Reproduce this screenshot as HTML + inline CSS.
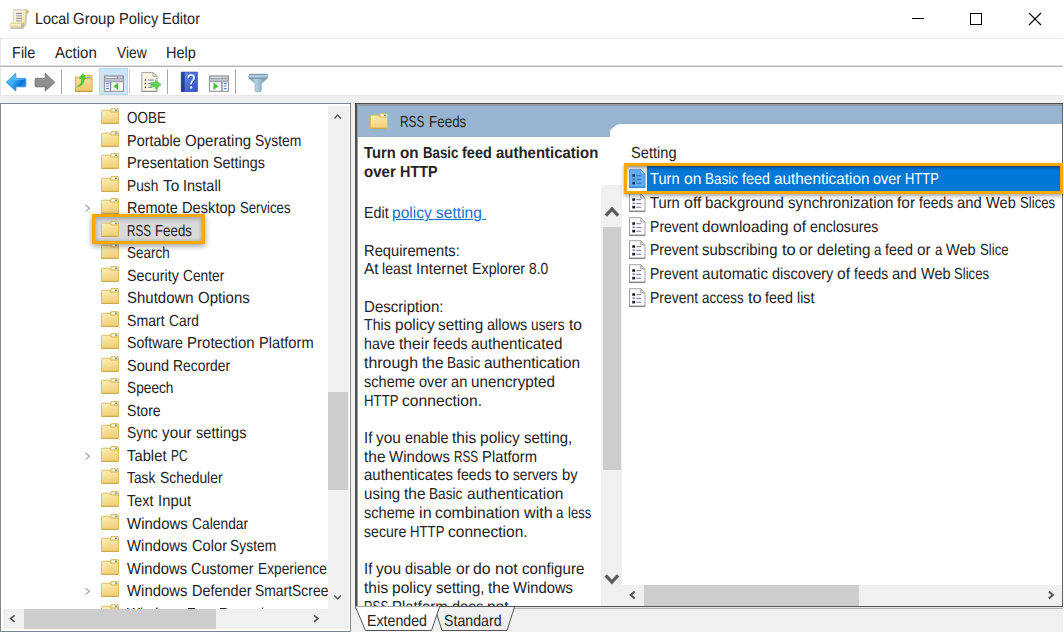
<!DOCTYPE html>
<html lang="en"><head><meta charset="utf-8"><title>Local Group Policy Editor</title>
<style>
html,body{margin:0;padding:0}
body{width:1064px;height:632px;position:relative;overflow:hidden;background:#fff;font-family:"Liberation Sans",sans-serif;font-size:15px;color:#242424}
.a{position:absolute}
.t{position:absolute;white-space:pre;line-height:20px;font-size:16px;transform-origin:0 50%}
.clip{position:absolute;overflow:hidden}
</style></head><body>

<svg width="0" height="0" style="position:absolute"><defs><linearGradient id="fg" x1="0" y1="0" x2="0.3" y2="1"><stop offset="0" stop-color="#fcefb8"/><stop offset="1" stop-color="#f1d077"/></linearGradient></defs></svg>
<svg style="position:absolute;left:4px;top:4px" width="32" height="30" viewBox="4 4 32 30">
<defs><linearGradient id="pg" x1="0" y1="0" x2="1" y2="1"><stop offset="0" stop-color="#fdf8e2"/><stop offset="0.6" stop-color="#fbefc0"/><stop offset="1" stop-color="#f3dc92"/></linearGradient>
<linearGradient id="rl" x1="0" y1="0" x2="0" y2="1"><stop offset="0" stop-color="#e8d9a0"/><stop offset="0.35" stop-color="#fdf6d8"/><stop offset="1" stop-color="#d8c680"/></linearGradient></defs>
<path d="M14.6 9h11.6l1.2 2.5-0.9 12.8-2.3 3.2H13.5z" fill="#b4b4b4" opacity="0.75"/>
<path d="M14 9.6h11.7l-0.7 14.2H12.9z" fill="url(#pg)"/>
<path d="M14 9.3h11.5v1.1H13.9z" fill="#cfcfc6"/>
<path d="M12.9 23.5L14 9.6" stroke="#c9c9c0" stroke-width="0.8" fill="none"/>
<path d="M25.2 9.4q3.4 0.2 3.6 2.2 -0.2 1.6-1.9 2.2l-1.2-1.4q1.2-0.6 0.9-1.5z" fill="#d8bf6e" stroke="#c4a850" stroke-width="0.4"/>
<rect x="16" y="12.9" width="6.2" height="1" fill="#8383b6"/><rect x="16" y="15" width="6.2" height="1.5" fill="#b8b8c4"/>
<rect x="16" y="17.8" width="6.2" height="1" fill="#8383b6"/><rect x="16" y="20" width="6.2" height="1.6" fill="#bdbdc4"/>
<path d="M10.2 27.9h13.4v0.8H10.6z" fill="#9a9a9a" opacity="0.8"/>
<rect x="10" y="23.1" width="14" height="4.4" rx="1.2" fill="url(#rl)" stroke="#d2bf7c" stroke-width="0.5"/>
<rect x="21" y="23.3" width="2.9" height="4" fill="#a9a9a9" opacity="0.75"/>
</svg>
<div class="a" style="left:912px;top:18px;width:12px;height:1px;background:#000"></div>
<div class="a" style="left:970px;top:13px;width:10px;height:10px;border:1px solid #000"></div>
<svg class="a" style="left:1028px;top:12px" width="14" height="14" viewBox="0 0 14 14"><path d="M1 1l12 12M13 1L1 13" stroke="#000" stroke-width="1.1" fill="none"/></svg>
<div class="a" style="left:0;top:38px;width:1063px;height:1px;background:#e6e6e6"></div>
<div class="a" style="left:0;top:39px;width:1px;height:56px;background:#e6e6e6"></div>
<div class="a" style="left:0;top:65px;width:1063px;height:1px;background:#e2e2e2"></div>
<div class="a" style="left:0;top:66px;width:1063px;height:1px;background:#b4b4b4"></div>
<div class="a" style="left:0;top:95px;width:1063px;height:537px;background:#f0f0f0"></div>
<div class="a" style="left:0;top:95px;width:1063px;height:1px;background:#e6e6e6"></div>


<div style="position:absolute;left:98.9px;top:68.1px;width:28.9px;height:26.8px;background:#cce4f8;box-shadow:inset 0 0 0 1px #b4d9f9"></div>
<svg style="position:absolute;left:0;top:66px" width="280" height="32" viewBox="0 66 280 32">
<defs>
<linearGradient id="ba" x1="0" y1="0" x2="1" y2="0.6"><stop offset="0" stop-color="#2fa6f4"/><stop offset="0.45" stop-color="#3db4fa"/><stop offset="0.8" stop-color="#0a6fd2"/><stop offset="1" stop-color="#2c8be0"/></linearGradient>
<linearGradient id="fa" x1="0" y1="0" x2="0" y2="1"><stop offset="0" stop-color="#7c7c7c"/><stop offset="0.5" stop-color="#929292"/><stop offset="1" stop-color="#858585"/></linearGradient>
<linearGradient id="fo" x1="0" y1="0" x2="0" y2="1"><stop offset="0" stop-color="#fbe29c"/><stop offset="1" stop-color="#efc568"/></linearGradient>
<linearGradient id="hb" x1="0" y1="0" x2="1" y2="1"><stop offset="0" stop-color="#6a8fe8"/><stop offset="1" stop-color="#3053c4"/></linearGradient>
<linearGradient id="hs" x1="0" y1="0" x2="0" y2="1"><stop offset="0" stop-color="#1d46b4"/><stop offset="1" stop-color="#2a3a86"/></linearGradient>
<linearGradient id="fu" x1="0" y1="0" x2="1" y2="0"><stop offset="0" stop-color="#6c90aa"/><stop offset="0.35" stop-color="#b9d2e0"/><stop offset="0.7" stop-color="#8fb0c6"/><stop offset="1" stop-color="#6c90aa"/></linearGradient>
<linearGradient id="fl" x1="0" y1="0" x2="0" y2="1"><stop offset="0" stop-color="#7d9db4"/><stop offset="0.5" stop-color="#c3d8e4"/><stop offset="1" stop-color="#7396b0"/></linearGradient>
</defs>
<!-- back -->
<path d="M6.3 82.2L15.8 73.4V78.4H25q0.8 0 0.8 0.8v6.8q0 0.8-0.8 0.8H15.8V91.1z" fill="url(#ba)" stroke="#2b8fe2" stroke-width="0.9" stroke-linejoin="round"/>
<path d="M8 82.2L15 75.6V79.3H24.6" fill="none" stroke="#8ed4fb" stroke-width="0.7" opacity="0.8"/>
<!-- forward -->
<path d="M54.7 82.2L45.2 73.4V78.4H36q-0.8 0-0.8 0.8v6.8q0 0.8 0.8 0.8h9.2V91.1z" fill="url(#fa)" stroke="#6a6a6a" stroke-width="0.9" stroke-linejoin="round"/>
<path d="M36.4 79.4H46V75.8l6.8 6.4" fill="none" stroke="#a8a8a8" stroke-width="0.7" opacity="0.8"/>
<rect x="61" y="69.3" width="1" height="24.7" fill="#a6a6a6"/>
<!-- up folder -->
<path d="M84.5 75.4h7.6v3.4h-8.8z" fill="#f1d68a" stroke="#cfab55" stroke-width="0.8"/>
<rect x="86.8" y="76.6" width="3.4" height="1.2" fill="#6aa8ea"/>
<path d="M75.4 77h7.4l1.3 1.8h8v12.6H75.4z" fill="url(#fo)" stroke="#cda750" stroke-width="0.9"/>
<path d="M75.2 91.4h17.2" stroke="#b8913c" stroke-width="0.9"/>
<path d="M77.4 86.2c3.2-1 4.6-4 4.4-7.6h-2.6l3.6-5.2 3.4 5.2h-2c0.2 4.2-2.6 7.6-6.6 8.2z" fill="#48cf36" stroke="#35b024" stroke-width="0.5"/>
<!-- show/hide tree -->
<rect x="104.4" y="75.9" width="19" height="15.4" fill="#fafafa" stroke="#8c8c98" stroke-width="1"/>
<rect x="104.9" y="76.4" width="18" height="2.8" fill="#9c9ca8"/><rect x="105.6" y="77" width="11.2" height="1" fill="#e6e6ee"/><rect x="118.3" y="76.9" width="1.3" height="1.3" fill="#f2f2f2"/><rect x="120.6" y="76.9" width="1.6" height="1.3" fill="#e0e0e8"/>
<rect x="104.9" y="79.2" width="18" height="2.6" fill="#b9bdc9"/>
<rect x="104.9" y="81.4" width="18" height="0.8" fill="#8c8c98"/>
<rect x="109.9" y="82" width="1.3" height="9" fill="#7d8296"/>
<rect x="106" y="83" width="2.8" height="1.1" fill="#3f7fd2"/><rect x="106" y="85.5" width="2.8" height="1.1" fill="#6a9ad8"/><rect x="106" y="88" width="2.8" height="1.1" fill="#3f7fd2"/>
<path d="M118 83v6.6l-4.3-3.3z" fill="#4ac238" stroke="#3aa82a" stroke-width="0.4"/>
<rect x="129" y="69.3" width="1" height="24.7" fill="#cfcfcf"/>
<!-- export list -->
<path d="M141.8 72.4h11.2l4 4v15h-15.2z" fill="#fdf6e2" stroke="#a0a0a0" stroke-width="1"/>
<path d="M153 72.4v4h4z" fill="#e6e6e6" stroke="#a0a0a0" stroke-width="0.8"/>
<path d="M141.5 91.4h15.8" stroke="#8a8a8a" stroke-width="1"/>
<rect x="144.8" y="79.3" width="1.3" height="1.5" fill="#444"/><rect x="148" y="79.5" width="6" height="1.1" fill="#8a8ab8"/>
<rect x="144.8" y="82.8" width="1.3" height="1.5" fill="#222"/><rect x="148" y="83" width="4" height="1.1" fill="#8a8ab8"/>
<rect x="144.8" y="86.6" width="1.3" height="1.5" fill="#222"/><rect x="148" y="86.8" width="4" height="1.1" fill="#8a8ab8"/>
<path d="M150.8 82.6h4.6v-2.7l5.8 4.8-5.8 4.8v-2.7h-4.6z" fill="#62d050" stroke="#48bd36" stroke-width="0.5"/>
<rect x="167" y="69.3" width="1" height="24.7" fill="#a6a6a6"/>
<!-- help -->
<rect x="181.2" y="72.1" width="16.1" height="19.5" fill="url(#hb)"/>
<rect x="181.2" y="72.1" width="3.5" height="19.5" fill="url(#hs)"/>
<rect x="181.2" y="72.1" width="16.1" height="19.5" fill="none" stroke="#2443a6" stroke-width="0.7"/>
<path d="M188.2 78.2q0-3.2 3-3.2 2.9 0 2.9 2.8 0 1.6-1.4 2.9-1.6 1.5-1.6 3.6" fill="none" stroke="#1f3a90" stroke-width="1.8" transform="translate(0.7,0.7)" opacity="0.55"/>
<path d="M188.2 78.2q0-3.2 3-3.2 2.9 0 2.9 2.8 0 1.6-1.4 2.9-1.6 1.5-1.6 3.6" fill="none" stroke="#fff" stroke-width="1.7"/>
<circle cx="191.1" cy="87.4" r="1.2" fill="#fff"/>
<!-- action pane -->
<rect x="209.4" y="75.9" width="19" height="15.4" fill="#fafafa" stroke="#8c8c98" stroke-width="1"/>
<rect x="209.9" y="76.4" width="18" height="2.8" fill="#9c9ca8"/><rect x="210.6" y="77" width="11.2" height="1" fill="#e6e6ee"/><rect x="223.3" y="76.9" width="1.3" height="1.3" fill="#f2f2f2"/><rect x="225.6" y="76.9" width="1.6" height="1.3" fill="#e0e0e8"/>
<rect x="209.9" y="79.2" width="18" height="2.6" fill="#b9bdc9"/>
<rect x="209.9" y="81.4" width="18" height="0.8" fill="#8c8c98"/>
<rect x="221.3" y="82" width="1.3" height="9" fill="#7d8296"/>
<rect x="223.8" y="83" width="2.8" height="1.1" fill="#3f7fd2"/><rect x="223.8" y="85.5" width="2.8" height="1.1" fill="#6a9ad8"/><rect x="223.8" y="88" width="2.8" height="1.1" fill="#3f7fd2"/>
<path d="M213.8 83v6.6l4.3-3.3z" fill="#4ac238" stroke="#3aa82a" stroke-width="0.4"/>
<rect x="235" y="69.3" width="1" height="24.7" fill="#a6a6a6"/>
<!-- filter -->
<path d="M249.2 78.2h18l-6 5.6v6.6q0 1.2-1.2 1.2h-3.6q-1.2 0-1.2-1.2v-6.6z" fill="url(#fu)" stroke="#7396b0" stroke-width="0.6"/>
<rect x="248.9" y="74.1" width="18.6" height="4.3" rx="0.8" fill="url(#fl)" stroke="#7396b0" stroke-width="0.6"/>
</svg>

<div class="a" style="left:0;top:103px;width:349px;height:527px;background:#fff;border:1px solid #828790"></div>
<div class="clip" style="left:2px;top:105px;width:326px;height:504px">
<svg style="position:absolute;left:99px;top:3.0px" width="18" height="16" viewBox="0 0 18 16">
<path d="M10.2 0.6h6.3q1 0 1 1V4.6H8.6z" fill="#f3dc93" stroke="#dbbc63" stroke-width="1"/>
<rect x="11.2" y="1.6" width="3" height="1.6" fill="#fff"/><rect x="14" y="1.6" width="1.8" height="1.6" fill="#4f9ae0"/>
<path d="M0.5 3.3q0-1.1 1.1-1.1h6.9l1.4 1.9h7.6v11.4H0.5z" fill="url(#fg)" stroke="#dcbd66" stroke-width="1"/>
<path d="M0.5 15.3h17" stroke="#c9a74a" stroke-width="1"/>
</svg>
<svg style="position:absolute;left:99px;top:25.53px" width="18" height="16" viewBox="0 0 18 16">
<path d="M10.2 0.6h6.3q1 0 1 1V4.6H8.6z" fill="#f3dc93" stroke="#dbbc63" stroke-width="1"/>
<rect x="11.2" y="1.6" width="3" height="1.6" fill="#fff"/><rect x="14" y="1.6" width="1.8" height="1.6" fill="#4f9ae0"/>
<path d="M0.5 3.3q0-1.1 1.1-1.1h6.9l1.4 1.9h7.6v11.4H0.5z" fill="url(#fg)" stroke="#dcbd66" stroke-width="1"/>
<path d="M0.5 15.3h17" stroke="#c9a74a" stroke-width="1"/>
</svg>
<svg style="position:absolute;left:99px;top:48.06px" width="18" height="16" viewBox="0 0 18 16">
<path d="M10.2 0.6h6.3q1 0 1 1V4.6H8.6z" fill="#f3dc93" stroke="#dbbc63" stroke-width="1"/>
<rect x="11.2" y="1.6" width="3" height="1.6" fill="#fff"/><rect x="14" y="1.6" width="1.8" height="1.6" fill="#4f9ae0"/>
<path d="M0.5 3.3q0-1.1 1.1-1.1h6.9l1.4 1.9h7.6v11.4H0.5z" fill="url(#fg)" stroke="#dcbd66" stroke-width="1"/>
<path d="M0.5 15.3h17" stroke="#c9a74a" stroke-width="1"/>
</svg>
<svg style="position:absolute;left:99px;top:70.59px" width="18" height="16" viewBox="0 0 18 16">
<path d="M10.2 0.6h6.3q1 0 1 1V4.6H8.6z" fill="#f3dc93" stroke="#dbbc63" stroke-width="1"/>
<rect x="11.2" y="1.6" width="3" height="1.6" fill="#fff"/><rect x="14" y="1.6" width="1.8" height="1.6" fill="#4f9ae0"/>
<path d="M0.5 3.3q0-1.1 1.1-1.1h6.9l1.4 1.9h7.6v11.4H0.5z" fill="url(#fg)" stroke="#dcbd66" stroke-width="1"/>
<path d="M0.5 15.3h17" stroke="#c9a74a" stroke-width="1"/>
</svg>
<svg style="position:absolute;left:99px;top:93.12px" width="18" height="16" viewBox="0 0 18 16">
<path d="M10.2 0.6h6.3q1 0 1 1V4.6H8.6z" fill="#f3dc93" stroke="#dbbc63" stroke-width="1"/>
<rect x="11.2" y="1.6" width="3" height="1.6" fill="#fff"/><rect x="14" y="1.6" width="1.8" height="1.6" fill="#4f9ae0"/>
<path d="M0.5 3.3q0-1.1 1.1-1.1h6.9l1.4 1.9h7.6v11.4H0.5z" fill="url(#fg)" stroke="#dcbd66" stroke-width="1"/>
<path d="M0.5 15.3h17" stroke="#c9a74a" stroke-width="1"/>
</svg>
<svg class="a" style="left:82.2px;top:98.4px" width="7" height="10" viewBox="0 0 7 10"><path d="M1.5 2l4 3.3-4 3.3" fill="none" stroke="#a4a4a4" stroke-width="1.2"/></svg>
<svg style="position:absolute;left:99px;top:115.65px" width="18" height="16" viewBox="0 0 18 16">
<path d="M10.2 0.6h6.3q1 0 1 1V4.6H8.6z" fill="#f3dc93" stroke="#dbbc63" stroke-width="1"/>
<rect x="11.2" y="1.6" width="3" height="1.6" fill="#fff"/><rect x="14" y="1.6" width="1.8" height="1.6" fill="#4f9ae0"/>
<path d="M0.5 3.3q0-1.1 1.1-1.1h6.9l1.4 1.9h7.6v11.4H0.5z" fill="url(#fg)" stroke="#dcbd66" stroke-width="1"/>
<path d="M0.5 15.3h17" stroke="#c9a74a" stroke-width="1"/>
</svg>
<svg style="position:absolute;left:99px;top:138.18px" width="18" height="16" viewBox="0 0 18 16">
<path d="M10.2 0.6h6.3q1 0 1 1V4.6H8.6z" fill="#f3dc93" stroke="#dbbc63" stroke-width="1"/>
<rect x="11.2" y="1.6" width="3" height="1.6" fill="#fff"/><rect x="14" y="1.6" width="1.8" height="1.6" fill="#4f9ae0"/>
<path d="M0.5 3.3q0-1.1 1.1-1.1h6.9l1.4 1.9h7.6v11.4H0.5z" fill="url(#fg)" stroke="#dcbd66" stroke-width="1"/>
<path d="M0.5 15.3h17" stroke="#c9a74a" stroke-width="1"/>
</svg>
<svg style="position:absolute;left:99px;top:160.71px" width="18" height="16" viewBox="0 0 18 16">
<path d="M10.2 0.6h6.3q1 0 1 1V4.6H8.6z" fill="#f3dc93" stroke="#dbbc63" stroke-width="1"/>
<rect x="11.2" y="1.6" width="3" height="1.6" fill="#fff"/><rect x="14" y="1.6" width="1.8" height="1.6" fill="#4f9ae0"/>
<path d="M0.5 3.3q0-1.1 1.1-1.1h6.9l1.4 1.9h7.6v11.4H0.5z" fill="url(#fg)" stroke="#dcbd66" stroke-width="1"/>
<path d="M0.5 15.3h17" stroke="#c9a74a" stroke-width="1"/>
</svg>
<svg style="position:absolute;left:99px;top:183.24px" width="18" height="16" viewBox="0 0 18 16">
<path d="M10.2 0.6h6.3q1 0 1 1V4.6H8.6z" fill="#f3dc93" stroke="#dbbc63" stroke-width="1"/>
<rect x="11.2" y="1.6" width="3" height="1.6" fill="#fff"/><rect x="14" y="1.6" width="1.8" height="1.6" fill="#4f9ae0"/>
<path d="M0.5 3.3q0-1.1 1.1-1.1h6.9l1.4 1.9h7.6v11.4H0.5z" fill="url(#fg)" stroke="#dcbd66" stroke-width="1"/>
<path d="M0.5 15.3h17" stroke="#c9a74a" stroke-width="1"/>
</svg>
<svg style="position:absolute;left:99px;top:205.77px" width="18" height="16" viewBox="0 0 18 16">
<path d="M10.2 0.6h6.3q1 0 1 1V4.6H8.6z" fill="#f3dc93" stroke="#dbbc63" stroke-width="1"/>
<rect x="11.2" y="1.6" width="3" height="1.6" fill="#fff"/><rect x="14" y="1.6" width="1.8" height="1.6" fill="#4f9ae0"/>
<path d="M0.5 3.3q0-1.1 1.1-1.1h6.9l1.4 1.9h7.6v11.4H0.5z" fill="url(#fg)" stroke="#dcbd66" stroke-width="1"/>
<path d="M0.5 15.3h17" stroke="#c9a74a" stroke-width="1"/>
</svg>
<svg style="position:absolute;left:99px;top:228.3px" width="18" height="16" viewBox="0 0 18 16">
<path d="M10.2 0.6h6.3q1 0 1 1V4.6H8.6z" fill="#f3dc93" stroke="#dbbc63" stroke-width="1"/>
<rect x="11.2" y="1.6" width="3" height="1.6" fill="#fff"/><rect x="14" y="1.6" width="1.8" height="1.6" fill="#4f9ae0"/>
<path d="M0.5 3.3q0-1.1 1.1-1.1h6.9l1.4 1.9h7.6v11.4H0.5z" fill="url(#fg)" stroke="#dcbd66" stroke-width="1"/>
<path d="M0.5 15.3h17" stroke="#c9a74a" stroke-width="1"/>
</svg>
<svg style="position:absolute;left:99px;top:250.83px" width="18" height="16" viewBox="0 0 18 16">
<path d="M10.2 0.6h6.3q1 0 1 1V4.6H8.6z" fill="#f3dc93" stroke="#dbbc63" stroke-width="1"/>
<rect x="11.2" y="1.6" width="3" height="1.6" fill="#fff"/><rect x="14" y="1.6" width="1.8" height="1.6" fill="#4f9ae0"/>
<path d="M0.5 3.3q0-1.1 1.1-1.1h6.9l1.4 1.9h7.6v11.4H0.5z" fill="url(#fg)" stroke="#dcbd66" stroke-width="1"/>
<path d="M0.5 15.3h17" stroke="#c9a74a" stroke-width="1"/>
</svg>
<svg style="position:absolute;left:99px;top:273.36px" width="18" height="16" viewBox="0 0 18 16">
<path d="M10.2 0.6h6.3q1 0 1 1V4.6H8.6z" fill="#f3dc93" stroke="#dbbc63" stroke-width="1"/>
<rect x="11.2" y="1.6" width="3" height="1.6" fill="#fff"/><rect x="14" y="1.6" width="1.8" height="1.6" fill="#4f9ae0"/>
<path d="M0.5 3.3q0-1.1 1.1-1.1h6.9l1.4 1.9h7.6v11.4H0.5z" fill="url(#fg)" stroke="#dcbd66" stroke-width="1"/>
<path d="M0.5 15.3h17" stroke="#c9a74a" stroke-width="1"/>
</svg>
<svg style="position:absolute;left:99px;top:295.89px" width="18" height="16" viewBox="0 0 18 16">
<path d="M10.2 0.6h6.3q1 0 1 1V4.6H8.6z" fill="#f3dc93" stroke="#dbbc63" stroke-width="1"/>
<rect x="11.2" y="1.6" width="3" height="1.6" fill="#fff"/><rect x="14" y="1.6" width="1.8" height="1.6" fill="#4f9ae0"/>
<path d="M0.5 3.3q0-1.1 1.1-1.1h6.9l1.4 1.9h7.6v11.4H0.5z" fill="url(#fg)" stroke="#dcbd66" stroke-width="1"/>
<path d="M0.5 15.3h17" stroke="#c9a74a" stroke-width="1"/>
</svg>
<svg style="position:absolute;left:99px;top:318.42px" width="18" height="16" viewBox="0 0 18 16">
<path d="M10.2 0.6h6.3q1 0 1 1V4.6H8.6z" fill="#f3dc93" stroke="#dbbc63" stroke-width="1"/>
<rect x="11.2" y="1.6" width="3" height="1.6" fill="#fff"/><rect x="14" y="1.6" width="1.8" height="1.6" fill="#4f9ae0"/>
<path d="M0.5 3.3q0-1.1 1.1-1.1h6.9l1.4 1.9h7.6v11.4H0.5z" fill="url(#fg)" stroke="#dcbd66" stroke-width="1"/>
<path d="M0.5 15.3h17" stroke="#c9a74a" stroke-width="1"/>
</svg>
<svg style="position:absolute;left:99px;top:340.95px" width="18" height="16" viewBox="0 0 18 16">
<path d="M10.2 0.6h6.3q1 0 1 1V4.6H8.6z" fill="#f3dc93" stroke="#dbbc63" stroke-width="1"/>
<rect x="11.2" y="1.6" width="3" height="1.6" fill="#fff"/><rect x="14" y="1.6" width="1.8" height="1.6" fill="#4f9ae0"/>
<path d="M0.5 3.3q0-1.1 1.1-1.1h6.9l1.4 1.9h7.6v11.4H0.5z" fill="url(#fg)" stroke="#dcbd66" stroke-width="1"/>
<path d="M0.5 15.3h17" stroke="#c9a74a" stroke-width="1"/>
</svg>
<svg class="a" style="left:82.2px;top:346.3px" width="7" height="10" viewBox="0 0 7 10"><path d="M1.5 2l4 3.3-4 3.3" fill="none" stroke="#a4a4a4" stroke-width="1.2"/></svg>
<svg style="position:absolute;left:99px;top:363.48px" width="18" height="16" viewBox="0 0 18 16">
<path d="M10.2 0.6h6.3q1 0 1 1V4.6H8.6z" fill="#f3dc93" stroke="#dbbc63" stroke-width="1"/>
<rect x="11.2" y="1.6" width="3" height="1.6" fill="#fff"/><rect x="14" y="1.6" width="1.8" height="1.6" fill="#4f9ae0"/>
<path d="M0.5 3.3q0-1.1 1.1-1.1h6.9l1.4 1.9h7.6v11.4H0.5z" fill="url(#fg)" stroke="#dcbd66" stroke-width="1"/>
<path d="M0.5 15.3h17" stroke="#c9a74a" stroke-width="1"/>
</svg>
<svg style="position:absolute;left:99px;top:386.01px" width="18" height="16" viewBox="0 0 18 16">
<path d="M10.2 0.6h6.3q1 0 1 1V4.6H8.6z" fill="#f3dc93" stroke="#dbbc63" stroke-width="1"/>
<rect x="11.2" y="1.6" width="3" height="1.6" fill="#fff"/><rect x="14" y="1.6" width="1.8" height="1.6" fill="#4f9ae0"/>
<path d="M0.5 3.3q0-1.1 1.1-1.1h6.9l1.4 1.9h7.6v11.4H0.5z" fill="url(#fg)" stroke="#dcbd66" stroke-width="1"/>
<path d="M0.5 15.3h17" stroke="#c9a74a" stroke-width="1"/>
</svg>
<svg style="position:absolute;left:99px;top:408.54px" width="18" height="16" viewBox="0 0 18 16">
<path d="M10.2 0.6h6.3q1 0 1 1V4.6H8.6z" fill="#f3dc93" stroke="#dbbc63" stroke-width="1"/>
<rect x="11.2" y="1.6" width="3" height="1.6" fill="#fff"/><rect x="14" y="1.6" width="1.8" height="1.6" fill="#4f9ae0"/>
<path d="M0.5 3.3q0-1.1 1.1-1.1h6.9l1.4 1.9h7.6v11.4H0.5z" fill="url(#fg)" stroke="#dcbd66" stroke-width="1"/>
<path d="M0.5 15.3h17" stroke="#c9a74a" stroke-width="1"/>
</svg>
<svg style="position:absolute;left:99px;top:431.07px" width="18" height="16" viewBox="0 0 18 16">
<path d="M10.2 0.6h6.3q1 0 1 1V4.6H8.6z" fill="#f3dc93" stroke="#dbbc63" stroke-width="1"/>
<rect x="11.2" y="1.6" width="3" height="1.6" fill="#fff"/><rect x="14" y="1.6" width="1.8" height="1.6" fill="#4f9ae0"/>
<path d="M0.5 3.3q0-1.1 1.1-1.1h6.9l1.4 1.9h7.6v11.4H0.5z" fill="url(#fg)" stroke="#dcbd66" stroke-width="1"/>
<path d="M0.5 15.3h17" stroke="#c9a74a" stroke-width="1"/>
</svg>
<svg style="position:absolute;left:99px;top:453.6px" width="18" height="16" viewBox="0 0 18 16">
<path d="M10.2 0.6h6.3q1 0 1 1V4.6H8.6z" fill="#f3dc93" stroke="#dbbc63" stroke-width="1"/>
<rect x="11.2" y="1.6" width="3" height="1.6" fill="#fff"/><rect x="14" y="1.6" width="1.8" height="1.6" fill="#4f9ae0"/>
<path d="M0.5 3.3q0-1.1 1.1-1.1h6.9l1.4 1.9h7.6v11.4H0.5z" fill="url(#fg)" stroke="#dcbd66" stroke-width="1"/>
<path d="M0.5 15.3h17" stroke="#c9a74a" stroke-width="1"/>
</svg>
<svg style="position:absolute;left:99px;top:476.13px" width="18" height="16" viewBox="0 0 18 16">
<path d="M10.2 0.6h6.3q1 0 1 1V4.6H8.6z" fill="#f3dc93" stroke="#dbbc63" stroke-width="1"/>
<rect x="11.2" y="1.6" width="3" height="1.6" fill="#fff"/><rect x="14" y="1.6" width="1.8" height="1.6" fill="#4f9ae0"/>
<path d="M0.5 3.3q0-1.1 1.1-1.1h6.9l1.4 1.9h7.6v11.4H0.5z" fill="url(#fg)" stroke="#dcbd66" stroke-width="1"/>
<path d="M0.5 15.3h17" stroke="#c9a74a" stroke-width="1"/>
</svg>
<svg class="a" style="left:82.2px;top:481.4px" width="7" height="10" viewBox="0 0 7 10"><path d="M1.5 2l4 3.3-4 3.3" fill="none" stroke="#a4a4a4" stroke-width="1.2"/></svg>
<svg style="position:absolute;left:99px;top:498.66px" width="18" height="16" viewBox="0 0 18 16">
<path d="M10.2 0.6h6.3q1 0 1 1V4.6H8.6z" fill="#f3dc93" stroke="#dbbc63" stroke-width="1"/>
<rect x="11.2" y="1.6" width="3" height="1.6" fill="#fff"/><rect x="14" y="1.6" width="1.8" height="1.6" fill="#4f9ae0"/>
<path d="M0.5 3.3q0-1.1 1.1-1.1h6.9l1.4 1.9h7.6v11.4H0.5z" fill="url(#fg)" stroke="#dcbd66" stroke-width="1"/>
<path d="M0.5 15.3h17" stroke="#c9a74a" stroke-width="1"/>
</svg>
<svg class="a" style="left:82.2px;top:504.0px" width="7" height="10" viewBox="0 0 7 10"><path d="M1.5 2l4 3.3-4 3.3" fill="none" stroke="#a4a4a4" stroke-width="1.2"/></svg>
<div class="a" style="left:-2px;top:-105px"><span class="t" style="left:127.30px;top:108px;transform:scaleX(0.8450) skewX(.3deg)">OOBE</span>
<span class="t" style="left:127.30px;top:131px;transform:scaleX(0.9032) skewX(.3deg)">Portable </span>
<span class="t" style="left:185.04px;top:131px;transform:scaleX(0.9409) skewX(.3deg)">Operating </span>
<span class="t" style="left:255.07px;top:131px;transform:scaleX(0.8701) skewX(.3deg)">System</span>
<span class="t" style="left:127.30px;top:153px;transform:scaleX(0.9108) skewX(.3deg)">Presentation </span>
<span class="t" style="left:213.05px;top:153px;transform:scaleX(0.8986) skewX(.3deg)">Settings</span>
<span class="t" style="left:127.30px;top:176px;transform:scaleX(0.8599) skewX(.3deg)">Push </span>
<span class="t" style="left:162.53px;top:176px;transform:scaleX(0.9627) skewX(.3deg)">To </span>
<span class="t" style="left:182.66px;top:176px;transform:scaleX(0.9053) skewX(.3deg)">Install</span>
<span class="t" style="left:127.30px;top:198px;transform:scaleX(0.9056) skewX(.3deg)">Remote </span>
<span class="t" style="left:181.93px;top:198px;transform:scaleX(0.9151) skewX(.3deg)">Desktop </span>
<span class="t" style="left:239.54px;top:198px;transform:scaleX(0.8225) skewX(.3deg)">Services</span>
<span class="t" style="left:127.30px;top:221px;transform:scaleX(0.7328) skewX(.3deg)">RSS </span>
<span class="t" style="left:155.33px;top:221px;transform:scaleX(0.8290) skewX(.3deg)">Feeds</span>
<span class="t" style="left:127.30px;top:243px;transform:scaleX(0.8414) skewX(.3deg)">Search</span>
<span class="t" style="left:127.30px;top:266px;transform:scaleX(0.8982) skewX(.3deg)">Security </span>
<span class="t" style="left:183.13px;top:266px;transform:scaleX(0.8599) skewX(.3deg)">Center</span>
<span class="t" style="left:127.30px;top:288px;transform:scaleX(0.9363) skewX(.3deg)">Shutdown </span>
<span class="t" style="left:197.84px;top:288px;transform:scaleX(0.9405) skewX(.3deg)">Options</span>
<span class="t" style="left:127.30px;top:311px;transform:scaleX(0.8826) skewX(.3deg)">Smart </span>
<span class="t" style="left:168.86px;top:311px;transform:scaleX(0.8627) skewX(.3deg)">Card</span>
<span class="t" style="left:127.30px;top:333px;transform:scaleX(0.8866) skewX(.3deg)">Software </span>
<span class="t" style="left:187.19px;top:333px;transform:scaleX(0.9384) skewX(.3deg)">Protection </span>
<span class="t" style="left:258.70px;top:333px;transform:scaleX(0.9166) skewX(.3deg)">Platform</span>
<span class="t" style="left:127.30px;top:356px;transform:scaleX(0.9088) skewX(.3deg)">Sound </span>
<span class="t" style="left:173.25px;top:356px;transform:scaleX(0.8687) skewX(.3deg)">Recorder</span>
<span class="t" style="left:127.30px;top:378px;transform:scaleX(0.8563) skewX(.3deg)">Speech</span>
<span class="t" style="left:127.30px;top:401px;transform:scaleX(0.8789) skewX(.3deg)">Store</span>
<span class="t" style="left:127.30px;top:423px;transform:scaleX(0.8643) skewX(.3deg)">Sync </span>
<span class="t" style="left:161.95px;top:423px;transform:scaleX(0.9534) skewX(.3deg)">your </span>
<span class="t" style="left:195.52px;top:423px;transform:scaleX(0.9155) skewX(.3deg)">settings</span>
<span class="t" style="left:127.30px;top:446px;transform:scaleX(0.9245) skewX(.3deg)">Tablet </span>
<span class="t" style="left:170.66px;top:446px;transform:scaleX(0.7448) skewX(.3deg)">PC</span>
<span class="t" style="left:127.30px;top:468px;transform:scaleX(0.8633) skewX(.3deg)">Task </span>
<span class="t" style="left:159.59px;top:468px;transform:scaleX(0.8678) skewX(.3deg)">Scheduler</span>
<span class="t" style="left:127.30px;top:491px;transform:scaleX(0.8983) skewX(.3deg)">Text </span>
<span class="t" style="left:157.52px;top:491px;transform:scaleX(0.9320) skewX(.3deg)">Input</span>
<span class="t" style="left:127.30px;top:514px;transform:scaleX(0.9368) skewX(.3deg)">Windows </span>
<span class="t" style="left:192.03px;top:514px;transform:scaleX(0.8638) skewX(.3deg)">Calendar</span>
<span class="t" style="left:127.30px;top:536px;transform:scaleX(0.9303) skewX(.3deg)">Windows </span>
<span class="t" style="left:191.59px;top:536px;transform:scaleX(0.9154) skewX(.3deg)">Color </span>
<span class="t" style="left:230.49px;top:536px;transform:scaleX(0.8679) skewX(.3deg)">System</span>
<span class="t" style="left:127.30px;top:559px;transform:scaleX(0.9255) skewX(.3deg)">Windows </span>
<span class="t" style="left:191.25px;top:559px;transform:scaleX(0.9013) skewX(.3deg)">Customer </span>
<span class="t" style="left:257.64px;top:559px;transform:scaleX(0.8591) skewX(.3deg)">Experience</span>
<span class="t" style="left:127.30px;top:581px;transform:scaleX(0.9331) skewX(.3deg)">Windows </span>
<span class="t" style="left:191.78px;top:581px;transform:scaleX(0.9040) skewX(.3deg)">Defender </span>
<span class="t" style="left:255.20px;top:581px;transform:scaleX(0.8684) skewX(.3deg)">SmartScreen</span>
<span class="t" style="left:127.30px;top:604px;transform:scaleX(0.8617) skewX(.3deg)">Windows </span>
<span class="t" style="left:186.85px;top:604px;transform:scaleX(0.8111) skewX(.3deg)">Error </span>
<span class="t" style="left:219.30px;top:604px;transform:scaleX(0.8718) skewX(.3deg)">Reporting</span></div>
</div>
<div class="a" style="left:92px;top:214px;width:107px;height:24px;border:3px solid #f9a800;background:#d9d9d9;box-shadow:inset 0 2px 4px 0 #a8a8a8, inset 0 0 3px 1px #bbb, 0 2px 6px rgba(0,0,0,.4)"></div>
<svg style="position:absolute;left:101px;top:221px" width="18" height="16" viewBox="0 0 18 16">
<path d="M10.2 0.6h6.3q1 0 1 1V4.6H8.6z" fill="#f3dc93" stroke="#dbbc63" stroke-width="1"/>
<rect x="11.2" y="1.6" width="3" height="1.6" fill="#fff"/><rect x="14" y="1.6" width="1.8" height="1.6" fill="#4f9ae0"/>
<path d="M0.5 3.3q0-1.1 1.1-1.1h6.9l1.4 1.9h7.6v11.4H0.5z" fill="url(#fg)" stroke="#dcbd66" stroke-width="1"/>
<path d="M0.5 15.3h17" stroke="#c9a74a" stroke-width="1"/>
</svg>
<span class="t" style="left:127.30px;top:221px;transform:scaleX(0.7328) skewX(.3deg)">RSS </span>
<span class="t" style="left:155.33px;top:221px;transform:scaleX(0.8290) skewX(.3deg)">Feeds</span>
<div class="a" style="left:328.3px;top:106px;width:20.9px;height:503px;background:#f0f0f0"></div>
<div class="a" style="left:328.3px;top:392px;width:19.8px;height:97.5px;background:#cdcdcd"></div>
<svg class="a" style="left:332px;top:112px" width="12" height="10" viewBox="332 112 12 10"><path d="M334.5 118.6l3.2-3.5 3.2 3.5" fill="none" stroke="#5a5a5a" stroke-width="1.5"/></svg>
<svg class="a" style="left:332px;top:592px" width="12" height="10" viewBox="332 592 12 10"><path d="M334.4 595.4l3.2 3.5 3.2-3.5" fill="none" stroke="#5a5a5a" stroke-width="1.5"/></svg>
<div class="a" style="left:3.3px;top:609px;width:345.9px;height:20.2px;background:#f0f0f0"></div>
<div class="a" style="left:23.9px;top:609px;width:192.2px;height:19.6px;background:#cdcdcd"></div>
<svg class="a" style="left:6px;top:612px" width="12" height="14" viewBox="6 612 12 14"><path d="M14.6 615.3l-4 3.3 4 3.3" fill="none" stroke="#505050" stroke-width="1.6"/></svg>
<svg class="a" style="left:310px;top:612px" width="12" height="14" viewBox="310 612 12 14"><path d="M314 615.3l4 3.3-4 3.3" fill="none" stroke="#505050" stroke-width="1.6"/></svg>
<div class="a" style="left:0;top:630.6px;width:351px;height:1.4px;background:#7e8490"></div>
<div class="a" style="left:0;top:103px;width:1.2px;height:529px;background:#7e8490"></div>

<div class="a" style="left:355px;top:103px;width:708px;height:504px;background:#505050"></div>
<div class="a" style="left:356.6px;top:104.2px;width:705.4px;height:501.8px;background:#9c9c9c"></div>
<div class="a" style="left:357.8px;top:105.4px;width:704.2px;height:500.6px;background:#fff"></div>
<div class="a" style="left:357.8px;top:105.4px;width:704.2px;height:31.5px;background:#99b4d1"></div>
<div class="a" style="left:357.8px;top:105.2px;width:704.2px;height:1px;background:#8a9db4"></div>
<svg class="a" style="left:608px;top:122px" width="454" height="18" viewBox="608 122 454 18"><path d="M610 138V131.4L611.3 129.2L616.2 125.1L620.3 124H1062V138z" fill="#fff"/></svg>
<div class="a" style="left:1062px;top:103px;width:1px;height:504px;background:#606060"></div><div class="a" style="left:1062px;top:105px;width:1px;height:19px;background:#50607a"></div>
<div class="a" style="left:355px;top:606px;width:708px;height:1px;background:#555"></div>
<div class="a" style="left:355px;top:607px;width:708px;height:1px;background:#e4e4e4"></div>
<div class="a" style="left:355px;top:608px;width:708px;height:1px;background:#b4b4b4"></div>

<svg style="position:absolute;left:370px;top:113px" width="18" height="16" viewBox="0 0 18 16">
<path d="M10.2 0.6h6.3q1 0 1 1V4.6H8.6z" fill="#f3dc93" stroke="#dbbc63" stroke-width="1"/>
<rect x="11.2" y="1.6" width="3" height="1.6" fill="#fff"/><rect x="14" y="1.6" width="1.8" height="1.6" fill="#4f9ae0"/>
<path d="M0.5 3.3q0-1.1 1.1-1.1h6.9l1.4 1.9h7.6v11.4H0.5z" fill="url(#fg)" stroke="#dcbd66" stroke-width="1"/>
<path d="M0.5 15.3h17" stroke="#c9a74a" stroke-width="1"/>
</svg>
<div class="clip" style="left:358px;top:137px;width:243px;height:469px"><div class="a" style="left:-358px;top:-137px"><span class="t" style="left:363.80px;top:143px;transform:scaleX(0.9225) skewX(.3deg);font-weight:700">Turn </span>
<span class="t" style="left:399.67px;top:143px;transform:scaleX(0.9557) skewX(.3deg);font-weight:700">on </span>
<span class="t" style="left:422.53px;top:143px;transform:scaleX(0.8297) skewX(.3deg);font-weight:700">Basic </span>
<span class="t" style="left:462.13px;top:143px;transform:scaleX(0.9077) skewX(.3deg);font-weight:700">feed </span>
<span class="t" style="left:496.16px;top:143px;transform:scaleX(0.9353) skewX(.3deg);font-weight:700">authentication</span>
<span class="t" style="left:363.80px;top:162px;transform:scaleX(0.9416) skewX(.3deg);font-weight:700">over </span>
<span class="t" style="left:400.07px;top:162px;transform:scaleX(0.9010) skewX(.3deg);font-weight:700">HTTP</span>
<span class="t" style="left:363.80px;top:241px;transform:scaleX(0.9201) skewX(.3deg)">Requirements:</span>
<span class="t" style="left:363.80px;top:259px;transform:scaleX(0.9671) skewX(.3deg)">At </span>
<span class="t" style="left:382.36px;top:259px;transform:scaleX(0.8851) skewX(.3deg)">least </span>
<span class="t" style="left:416.21px;top:259px;transform:scaleX(0.9497) skewX(.3deg)">Internet </span>
<span class="t" style="left:471.67px;top:259px;transform:scaleX(0.8903) skewX(.3deg)">Explorer </span>
<span class="t" style="left:528.65px;top:259px;transform:scaleX(0.8661) skewX(.3deg)">8.0</span>
<span class="t" style="left:363.80px;top:297px;transform:scaleX(0.9406) skewX(.3deg)">Description:</span>
<span class="t" style="left:363.80px;top:315px;transform:scaleX(0.8866) skewX(.3deg)">This </span>
<span class="t" style="left:394.52px;top:315px;transform:scaleX(0.9713) skewX(.3deg)">policy </span>
<span class="t" style="left:438.17px;top:315px;transform:scaleX(0.9571) skewX(.3deg)">setting </span>
<span class="t" style="left:487.20px;top:315px;transform:scaleX(0.9076) skewX(.3deg)">allows </span>
<span class="t" style="left:531.47px;top:315px;transform:scaleX(0.8554) skewX(.3deg)">users </span>
<span class="t" style="left:568.86px;top:315px;transform:scaleX(0.9772) skewX(.3deg)">to</span>
<span class="t" style="left:363.80px;top:334px;transform:scaleX(0.8912) skewX(.3deg)">have </span>
<span class="t" style="left:398.66px;top:334px;transform:scaleX(0.9778) skewX(.3deg)">their </span>
<span class="t" style="left:433.03px;top:334px;transform:scaleX(0.8813) skewX(.3deg)">feeds </span>
<span class="t" style="left:471.47px;top:334px;transform:scaleX(0.9512) skewX(.3deg)">authenticated</span>
<span class="t" style="left:363.80px;top:353px;transform:scaleX(0.9955) skewX(.3deg)">through </span>
<span class="t" style="left:421.74px;top:353px;transform:scaleX(0.9672) skewX(.3deg)">the </span>
<span class="t" style="left:447.17px;top:353px;transform:scaleX(0.8498) skewX(.3deg)">Basic </span>
<span class="t" style="left:484.34px;top:353px;transform:scaleX(0.9648) skewX(.3deg)">authentication</span>
<span class="t" style="left:363.80px;top:372px;transform:scaleX(0.9101) skewX(.3deg)">scheme </span>
<span class="t" style="left:418.74px;top:372px;transform:scaleX(0.9103) skewX(.3deg)">over </span>
<span class="t" style="left:451.03px;top:372px;transform:scaleX(0.9144) skewX(.3deg)">an </span>
<span class="t" style="left:471.26px;top:372px;transform:scaleX(0.9527) skewX(.3deg)">unencrypted</span>
<span class="t" style="left:363.80px;top:391px;transform:scaleX(0.8287) skewX(.3deg)">HTTP </span>
<span class="t" style="left:402.40px;top:391px;transform:scaleX(0.9777) skewX(.3deg)">connection.</span>
<span class="t" style="left:363.80px;top:428px;transform:scaleX(0.9387) skewX(.3deg)">If </span>
<span class="t" style="left:376.07px;top:428px;transform:scaleX(0.9660) skewX(.3deg)">you </span>
<span class="t" style="left:404.91px;top:428px;transform:scaleX(0.9031) skewX(.3deg)">enable </span>
<span class="t" style="left:452.22px;top:428px;transform:scaleX(0.9708) skewX(.3deg)">this </span>
<span class="t" style="left:480.32px;top:428px;transform:scaleX(0.9721) skewX(.3deg)">policy </span>
<span class="t" style="left:524.01px;top:428px;transform:scaleX(0.9326) skewX(.3deg)">setting,</span>
<span class="t" style="left:363.80px;top:447px;transform:scaleX(0.9715) skewX(.3deg)">the </span>
<span class="t" style="left:389.34px;top:447px;transform:scaleX(0.9383) skewX(.3deg)">Windows </span>
<span class="t" style="left:454.18px;top:447px;transform:scaleX(0.7349) skewX(.3deg)">RSS </span>
<span class="t" style="left:482.30px;top:447px;transform:scaleX(0.9234) skewX(.3deg)">Platform</span>
<span class="t" style="left:363.80px;top:465px;transform:scaleX(0.9355) skewX(.3deg)">authenticates </span>
<span class="t" style="left:456.79px;top:465px;transform:scaleX(0.8836) skewX(.3deg)">feeds </span>
<span class="t" style="left:495.33px;top:465px;transform:scaleX(1.0453) skewX(.3deg)">to </span>
<span class="t" style="left:513.23px;top:465px;transform:scaleX(0.8495) skewX(.3deg)">servers </span>
<span class="t" style="left:561.73px;top:465px;transform:scaleX(0.9271) skewX(.3deg)">by</span>
<span class="t" style="left:363.80px;top:484px;transform:scaleX(0.9464) skewX(.3deg)">using </span>
<span class="t" style="left:403.93px;top:484px;transform:scaleX(0.9697) skewX(.3deg)">the </span>
<span class="t" style="left:429.43px;top:484px;transform:scaleX(0.8520) skewX(.3deg)">Basic </span>
<span class="t" style="left:466.69px;top:484px;transform:scaleX(0.9673) skewX(.3deg)">authentication</span>
<span class="t" style="left:363.80px;top:503px;transform:scaleX(0.9078) skewX(.3deg)">scheme </span>
<span class="t" style="left:418.60px;top:503px;transform:scaleX(1.0151) skewX(.3deg)">in </span>
<span class="t" style="left:435.19px;top:503px;transform:scaleX(0.9814) skewX(.3deg)">combination </span>
<span class="t" style="left:523.80px;top:503px;transform:scaleX(1.0096) skewX(.3deg)">with </span>
<span class="t" style="left:556.48px;top:503px;transform:scaleX(0.8400) skewX(.3deg)">a </span>
<span class="t" style="left:567.90px;top:503px;transform:scaleX(0.8120) skewX(.3deg)">less</span>
<span class="t" style="left:363.80px;top:522px;transform:scaleX(0.8802) skewX(.3deg)">secure </span>
<span class="t" style="left:410.03px;top:522px;transform:scaleX(0.8243) skewX(.3deg)">HTTP </span>
<span class="t" style="left:448.42px;top:522px;transform:scaleX(0.9725) skewX(.3deg)">connection.</span>
<span class="t" style="left:363.80px;top:559px;transform:scaleX(0.9465) skewX(.3deg)">If </span>
<span class="t" style="left:376.17px;top:559px;transform:scaleX(0.9740) skewX(.3deg)">you </span>
<span class="t" style="left:405.25px;top:559px;transform:scaleX(0.9154) skewX(.3deg)">disable </span>
<span class="t" style="left:455.62px;top:559px;transform:scaleX(0.9747) skewX(.3deg)">or </span>
<span class="t" style="left:473.44px;top:559px;transform:scaleX(0.9936) skewX(.3deg)">do </span>
<span class="t" style="left:495.08px;top:559px;transform:scaleX(1.0226) skewX(.3deg)">not </span>
<span class="t" style="left:521.78px;top:559px;transform:scaleX(0.9469) skewX(.3deg)">configure</span>
<span class="t" style="left:363.80px;top:578px;transform:scaleX(0.9712) skewX(.3deg)">this </span>
<span class="t" style="left:391.91px;top:578px;transform:scaleX(0.9725) skewX(.3deg)">policy </span>
<span class="t" style="left:435.61px;top:578px;transform:scaleX(0.9385) skewX(.3deg)">setting, </span>
<span class="t" style="left:487.95px;top:578px;transform:scaleX(0.9682) skewX(.3deg)">the </span>
<span class="t" style="left:513.40px;top:578px;transform:scaleX(0.9243) skewX(.3deg)">Windows</span>
<span class="t" style="left:363.80px;top:597px;transform:scaleX(0.7370) skewX(.3deg)">RSS </span>
<span class="t" style="left:392.00px;top:597px;transform:scaleX(0.9327) skewX(.3deg)">Platform </span>
<span class="t" style="left:451.51px;top:597px;transform:scaleX(0.9091) skewX(.3deg)">does </span>
<span class="t" style="left:486.99px;top:597px;transform:scaleX(0.9653) skewX(.3deg)">not</span>
<span class="t" style="left:363.80px;top:203px;transform:scaleX(0.8960) skewX(.3deg)">Edit</span>
<span class="t" style="left:392.00px;top:203px;transform:scaleX(0.9717) skewX(.3deg);color:#1670d0;text-decoration:underline">policy setting </span></div></div>
<div class="a" style="left:601.3px;top:184.6px;width:21.2px;height:421.4px;background:#f0f0f0"></div>
<div class="a" style="left:603px;top:227px;width:18px;height:243px;background:#cdcdcd"></div>
<svg class="a" style="left:603px;top:203px" width="18" height="16" viewBox="603 203 18 16"><path d="M605.8 215.6l6.2-6.6 6.2 6.6" fill="none" stroke="#5c5c5c" stroke-width="3.3"/></svg>
<svg class="a" style="left:603px;top:570px" width="18" height="18" viewBox="603 570 18 18"><path d="M605.7 575.3l6.2 6.8 6.2-6.8" fill="none" stroke="#5c5c5c" stroke-width="3.3"/></svg>

<div class="a" style="left:627px;top:166px;width:21px;height:25px;background:linear-gradient(#c2c2c2,#dedede 4px,#f4f4f4 12px,#fff 22px)"></div>
<div class="a" style="left:647.4px;top:166px;width:413px;height:25px;background:linear-gradient(#00509e,#0067c0 2px,#0078d7 5px,#0078d7)"></div>

<svg style="position:absolute;left:628.7px;top:168.9px" width="17" height="20" viewBox="0 0 17 20">
<path d="M0.5 0.7h11.2l4.3 4.3v13.4h-15.5z" fill="#63abe9" stroke="#4c98e0" stroke-width="1"/>
<path d="M11.7 0.7v4.3h4.3z" fill="#8cc3f2" stroke="#4c98e0" stroke-width="0.8"/>
<rect x="0.2" y="17.6" width="16.1" height="1.5" fill="#3f8bd6"/>
<rect x="3.3" y="5.3" width="2.7" height="2.5" fill="#12386f"/><rect x="7.3" y="6.2" width="5" height="1" fill="#2f73c4"/>
<rect x="3.5" y="9.3" width="2.3" height="1.9" fill="#2f73c4"/><rect x="7.3" y="9.9" width="5" height="1" fill="#2f73c4"/>
<rect x="3.3" y="12.9" width="2.7" height="2.5" fill="#12386f"/><rect x="7.3" y="13.7" width="5" height="1" fill="#2f73c4"/>
</svg>
<svg style="position:absolute;left:628.7px;top:192.7px" width="17" height="20" viewBox="0 0 17 20">
<path d="M0.5 0.7h11.2l4.3 4.3v13.4h-15.5z" fill="#fdfdfd" stroke="#a2a2a2" stroke-width="1"/>
<path d="M11.7 0.7v4.3h4.3z" fill="#dcdcdc" stroke="#a2a2a2" stroke-width="0.8"/>
<rect x="0.2" y="17.6" width="16.1" height="1.5" fill="#8a8a8a"/>
<rect x="3.3" y="5.3" width="2.7" height="2.5" fill="#151515"/><rect x="7.3" y="6.2" width="5" height="1" fill="#7b7bab"/>
<rect x="3.5" y="9.3" width="2.3" height="1.9" fill="#8a86b8"/><rect x="7.3" y="9.9" width="5" height="1" fill="#7b7bab"/>
<rect x="3.3" y="12.9" width="2.7" height="2.5" fill="#151515"/><rect x="7.3" y="13.7" width="5" height="1" fill="#7b7bab"/>
</svg>
<svg style="position:absolute;left:628.7px;top:216.5px" width="17" height="20" viewBox="0 0 17 20">
<path d="M0.5 0.7h11.2l4.3 4.3v13.4h-15.5z" fill="#fdfdfd" stroke="#a2a2a2" stroke-width="1"/>
<path d="M11.7 0.7v4.3h4.3z" fill="#dcdcdc" stroke="#a2a2a2" stroke-width="0.8"/>
<rect x="0.2" y="17.6" width="16.1" height="1.5" fill="#8a8a8a"/>
<rect x="3.3" y="5.3" width="2.7" height="2.5" fill="#151515"/><rect x="7.3" y="6.2" width="5" height="1" fill="#7b7bab"/>
<rect x="3.5" y="9.3" width="2.3" height="1.9" fill="#8a86b8"/><rect x="7.3" y="9.9" width="5" height="1" fill="#7b7bab"/>
<rect x="3.3" y="12.9" width="2.7" height="2.5" fill="#151515"/><rect x="7.3" y="13.7" width="5" height="1" fill="#7b7bab"/>
</svg>
<svg style="position:absolute;left:628.7px;top:240.3px" width="17" height="20" viewBox="0 0 17 20">
<path d="M0.5 0.7h11.2l4.3 4.3v13.4h-15.5z" fill="#fdfdfd" stroke="#a2a2a2" stroke-width="1"/>
<path d="M11.7 0.7v4.3h4.3z" fill="#dcdcdc" stroke="#a2a2a2" stroke-width="0.8"/>
<rect x="0.2" y="17.6" width="16.1" height="1.5" fill="#8a8a8a"/>
<rect x="3.3" y="5.3" width="2.7" height="2.5" fill="#151515"/><rect x="7.3" y="6.2" width="5" height="1" fill="#7b7bab"/>
<rect x="3.5" y="9.3" width="2.3" height="1.9" fill="#8a86b8"/><rect x="7.3" y="9.9" width="5" height="1" fill="#7b7bab"/>
<rect x="3.3" y="12.9" width="2.7" height="2.5" fill="#151515"/><rect x="7.3" y="13.7" width="5" height="1" fill="#7b7bab"/>
</svg>
<svg style="position:absolute;left:628.7px;top:264.1px" width="17" height="20" viewBox="0 0 17 20">
<path d="M0.5 0.7h11.2l4.3 4.3v13.4h-15.5z" fill="#fdfdfd" stroke="#a2a2a2" stroke-width="1"/>
<path d="M11.7 0.7v4.3h4.3z" fill="#dcdcdc" stroke="#a2a2a2" stroke-width="0.8"/>
<rect x="0.2" y="17.6" width="16.1" height="1.5" fill="#8a8a8a"/>
<rect x="3.3" y="5.3" width="2.7" height="2.5" fill="#151515"/><rect x="7.3" y="6.2" width="5" height="1" fill="#7b7bab"/>
<rect x="3.5" y="9.3" width="2.3" height="1.9" fill="#8a86b8"/><rect x="7.3" y="9.9" width="5" height="1" fill="#7b7bab"/>
<rect x="3.3" y="12.9" width="2.7" height="2.5" fill="#151515"/><rect x="7.3" y="13.7" width="5" height="1" fill="#7b7bab"/>
</svg>
<svg style="position:absolute;left:628.7px;top:287.9px" width="17" height="20" viewBox="0 0 17 20">
<path d="M0.5 0.7h11.2l4.3 4.3v13.4h-15.5z" fill="#fdfdfd" stroke="#a2a2a2" stroke-width="1"/>
<path d="M11.7 0.7v4.3h4.3z" fill="#dcdcdc" stroke="#a2a2a2" stroke-width="0.8"/>
<rect x="0.2" y="17.6" width="16.1" height="1.5" fill="#8a8a8a"/>
<rect x="3.3" y="5.3" width="2.7" height="2.5" fill="#151515"/><rect x="7.3" y="6.2" width="5" height="1" fill="#7b7bab"/>
<rect x="3.5" y="9.3" width="2.3" height="1.9" fill="#8a86b8"/><rect x="7.3" y="9.9" width="5" height="1" fill="#7b7bab"/>
<rect x="3.3" y="12.9" width="2.7" height="2.5" fill="#151515"/><rect x="7.3" y="13.7" width="5" height="1" fill="#7b7bab"/>
</svg>
<span class="t" style="left:650.00px;top:169px;transform:scaleX(0.9162) skewX(.3deg);color:#fff">Turn </span>
<span class="t" style="left:683.50px;top:169px;transform:scaleX(0.9802) skewX(.3deg);color:#fff">on </span>
<span class="t" style="left:704.84px;top:169px;transform:scaleX(0.8455) skewX(.3deg);color:#fff">Basic </span>
<span class="t" style="left:741.82px;top:169px;transform:scaleX(0.8955) skewX(.3deg);color:#fff">feed </span>
<span class="t" style="left:773.60px;top:169px;transform:scaleX(0.9582) skewX(.3deg);color:#fff">authentication </span>
<span class="t" style="left:872.97px;top:169px;transform:scaleX(0.8972) skewX(.3deg);color:#fff">over </span>
<span class="t" style="left:904.80px;top:169px;transform:scaleX(0.8079) skewX(.3deg);color:#fff">HTTP</span>
<span class="t" style="left:650.00px;top:193px;transform:scaleX(0.9203) skewX(.3deg)">Turn </span>
<span class="t" style="left:683.64px;top:193px;transform:scaleX(1.0004) skewX(.3deg)">off </span>
<span class="t" style="left:705.07px;top:193px;transform:scaleX(0.9427) skewX(.3deg)">background </span>
<span class="t" style="left:787.81px;top:193px;transform:scaleX(0.9491) skewX(.3deg)">synchronization </span>
<span class="t" style="left:897.24px;top:193px;transform:scaleX(0.9678) skewX(.3deg)">for </span>
<span class="t" style="left:919.22px;top:193px;transform:scaleX(0.8761) skewX(.3deg)">feeds </span>
<span class="t" style="left:957.43px;top:193px;transform:scaleX(0.9287) skewX(.3deg)">and </span>
<span class="t" style="left:986.14px;top:193px;transform:scaleX(0.9121) skewX(.3deg)">Web </span>
<span class="t" style="left:1019.80px;top:193px;transform:scaleX(0.8224) skewX(.3deg)">Slices</span>
<span class="t" style="left:650.00px;top:217px;transform:scaleX(0.8768) skewX(.3deg)">Prevent </span>
<span class="t" style="left:702.26px;top:217px;transform:scaleX(0.9635) skewX(.3deg)">downloading </span>
<span class="t" style="left:792.74px;top:217px;transform:scaleX(0.9857) skewX(.3deg)">of </span>
<span class="t" style="left:809.80px;top:217px;transform:scaleX(0.8840) skewX(.3deg)">enclosures</span>
<span class="t" style="left:650.00px;top:240px;transform:scaleX(0.8758) skewX(.3deg)">Prevent </span>
<span class="t" style="left:702.20px;top:240px;transform:scaleX(0.9319) skewX(.3deg)">subscribing </span>
<span class="t" style="left:781.53px;top:240px;transform:scaleX(1.0342) skewX(.3deg)">to </span>
<span class="t" style="left:799.23px;top:240px;transform:scaleX(0.9631) skewX(.3deg)">or </span>
<span class="t" style="left:816.84px;top:240px;transform:scaleX(0.9533) skewX(.3deg)">deleting </span>
<span class="t" style="left:874.18px;top:240px;transform:scaleX(0.8319) skewX(.3deg)">a </span>
<span class="t" style="left:885.49px;top:240px;transform:scaleX(0.8975) skewX(.3deg)">feed </span>
<span class="t" style="left:917.35px;top:240px;transform:scaleX(0.9631) skewX(.3deg)">or </span>
<span class="t" style="left:934.95px;top:240px;transform:scaleX(0.8319) skewX(.3deg)">a </span>
<span class="t" style="left:946.26px;top:240px;transform:scaleX(0.9100) skewX(.3deg)">Web </span>
<span class="t" style="left:979.85px;top:240px;transform:scaleX(0.8267) skewX(.3deg)">Slice</span>
<span class="t" style="left:650.00px;top:264px;transform:scaleX(0.8744) skewX(.3deg)">Prevent </span>
<span class="t" style="left:702.12px;top:264px;transform:scaleX(0.9510) skewX(.3deg)">automatic </span>
<span class="t" style="left:771.99px;top:264px;transform:scaleX(0.9077) skewX(.3deg)">discovery </span>
<span class="t" style="left:837.23px;top:264px;transform:scaleX(0.9831) skewX(.3deg)">of </span>
<span class="t" style="left:854.25px;top:264px;transform:scaleX(0.8728) skewX(.3deg)">feeds </span>
<span class="t" style="left:892.31px;top:264px;transform:scaleX(0.9252) skewX(.3deg)">and </span>
<span class="t" style="left:920.91px;top:264px;transform:scaleX(0.9086) skewX(.3deg)">Web </span>
<span class="t" style="left:954.44px;top:264px;transform:scaleX(0.8192) skewX(.3deg)">Slices</span>
<span class="t" style="left:650.00px;top:288px;transform:scaleX(0.8742) skewX(.3deg)">Prevent </span>
<span class="t" style="left:702.11px;top:288px;transform:scaleX(0.8353) skewX(.3deg)">access </span>
<span class="t" style="left:747.60px;top:288px;transform:scaleX(1.0323) skewX(.3deg)">to </span>
<span class="t" style="left:765.27px;top:288px;transform:scaleX(0.8958) skewX(.3deg)">feed </span>
<span class="t" style="left:797.07px;top:288px;transform:scaleX(0.8916) skewX(.3deg)">list</span>
<div class="a" style="left:624px;top:163px;width:433px;height:25px;border:3px solid #f9a800;box-shadow:0 2px 4px rgba(0,0,0,.35),inset 0 1px 2px rgba(0,0,0,.25)"></div>
<div class="a" style="left:622px;top:585.2px;width:440px;height:20.8px;background:#f0f0f0"></div>
<div class="a" style="left:643.9px;top:585.2px;width:215px;height:20.8px;background:#cdcdcd"></div>
<svg class="a" style="left:626px;top:588px" width="12" height="14" viewBox="626 588 12 14"><path d="M634.7 591.6l-4 3.4 4 3.4" fill="none" stroke="#555" stroke-width="2"/></svg>
<svg class="a" style="left:1044px;top:588px" width="12" height="14" viewBox="1044 588 12 14"><path d="M1048.8 591.6l4 3.4-4 3.4" fill="none" stroke="#555" stroke-width="2"/></svg>

<svg class="a" style="left:350px;top:606px" width="180" height="26" viewBox="0 0 180 26">
<path d="M84.5 1L92 24.5H157L164.5 1" fill="#f0f0f0" stroke="#555" stroke-width="1"/>
<path d="M5.5 0.5L15.5 24.5H81.5L89.5 0.5z" fill="#fff"/>
<path d="M5.5 1L15.5 24.5H81.5L89.5 1" fill="none" stroke="#555" stroke-width="1"/>
</svg>
<span class="t" style="left:35.00px;top:9px;transform:scaleX(0.9012) skewX(.3deg)">Local </span>
<span class="t" style="left:73.42px;top:9px;transform:scaleX(0.9396) skewX(.3deg)">Group </span>
<span class="t" style="left:119.15px;top:9px;transform:scaleX(0.9206) skewX(.3deg)">Policy </span>
<span class="t" style="left:162.39px;top:9px;transform:scaleX(0.9090) skewX(.3deg)">Editor</span>
<span class="t" style="left:11.50px;top:43px;transform:scaleX(0.9079) skewX(.3deg)">File</span>
<span class="t" style="left:55.00px;top:43px;transform:scaleX(0.9410) skewX(.3deg)">Action</span>
<span class="t" style="left:116.50px;top:43px;transform:scaleX(0.8612) skewX(.3deg)">View</span>
<span class="t" style="left:165.50px;top:43px;transform:scaleX(0.9089) skewX(.3deg)">Help</span>
<span class="t" style="left:400.40px;top:112px;transform:scaleX(0.7407) skewX(.3deg)">RSS </span>
<span class="t" style="left:428.73px;top:112px;transform:scaleX(0.8380) skewX(.3deg)">Feeds</span>
<span class="t" style="left:630.70px;top:143px;transform:scaleX(0.9159) skewX(.3deg)">Setting</span>
<span class="t" style="left:367.30px;top:611px;transform:scaleX(0.8874) skewX(.3deg)">Extended</span>
<span class="t" style="left:444.20px;top:611px;transform:scaleX(0.8870) skewX(.3deg)">Standard</span>
</body></html>
